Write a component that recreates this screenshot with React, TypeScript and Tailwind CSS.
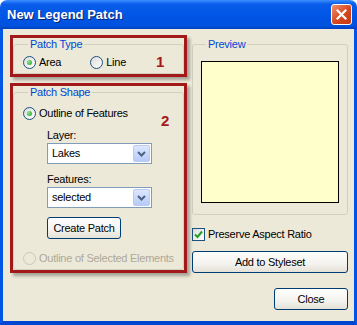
import React from "react";

const font = { fontFamily: '"Liberation Sans", Arial, sans-serif' };

const Radio = ({ checked = false, disabled = false }: { checked?: boolean; disabled?: boolean }) => (
  <span
    className={`flex h-[13px] w-[13px] shrink-0 items-center justify-center rounded-full border ${
      disabled
        ? "border-[#CAC8BB] bg-[#ECE9D8]"
        : "border-[#1C5180] bg-[linear-gradient(135deg,#DCDCD7,#FFFFFF)]"
    }`}
  >
    {checked && (
      <span className="h-[5px] w-[5px] rounded-full bg-[radial-gradient(circle_at_35%_35%,#8BE38B,#21A121)]" />
    )}
  </span>
);

const Dropdown = ({ value }: { value: string }) => (
  <div className="flex h-[21px] w-[105px] items-center border border-[#7F9DB9] bg-white pl-[4px] pr-px">
    <span className="flex-1 text-[11px] tracking-[-0.25px] text-black">{value}</span>
    <span className="flex h-[17px] w-[17px] items-center justify-center rounded-[2px] border border-[#B9CBF3] bg-[linear-gradient(to_bottom,#DDE7FE,#B6CBF8)]">
      <svg width="9" height="6" viewBox="0 0 9 6">
        <path d="M1 1 L4.5 4.5 L8 1" fill="none" stroke="#4D6185" strokeWidth="2" />
      </svg>
    </span>
  </div>
);

const XPButton = ({ label, className }: { label: string; className: string }) => (
  <button
    className={`flex items-center justify-center rounded-[3px] border border-[#003C74] bg-[linear-gradient(to_bottom,#FFFFFF,#F3F2EE_60%,#E4E1D6)] text-[11px] tracking-[-0.25px] text-black ${className}`}
  >
    {label}
  </button>
);

export default function App() {
  return (
    <div className="h-[325px] w-[357px] bg-white" style={font}>
      <div className="flex h-[325px] w-[357px] flex-col overflow-hidden rounded-t-[7px]">
        {/* title bar */}
        <div className="flex h-[29px] shrink-0 items-center justify-between bg-[linear-gradient(to_bottom,#3C8EFF_0%,#0A5DEA_14%,#0056E6_50%,#0052E0_88%,#0040BE_100%)] pl-[7px] pr-[5px]">
          <span className="text-[13px] font-bold text-white [text-shadow:1px_1px_0_#0A246A]">
            New Legend Patch
          </span>
          <span className="flex h-[21px] w-[21px] items-center justify-center rounded-[3px] border border-white bg-[linear-gradient(135deg,#F0906C,#D5471F_55%,#C23A14)]">
            <svg width="11" height="11" viewBox="0 0 11 11">
              <path d="M1.5 1.5 L9.5 9.5 M9.5 1.5 L1.5 9.5" stroke="white" strokeWidth="2.2" strokeLinecap="square" />
            </svg>
          </span>
        </div>

        {/* body */}
        <div className="flex flex-1 border-x-[3px] border-b-[4px] border-x-[#0055E5] border-b-[#0046D0] bg-[#ECE9D8] pl-[7px] pt-[6px] tracking-[-0.25px]">
          {/* left column */}
          <div className="flex w-[177px] flex-col gap-[6px]">
            <div className="relative h-[42px] border-[3px] border-[#A31818] shadow-[3px_3px_3px_rgba(0,0,0,0.3)]">
              <fieldset className="h-full rounded-[3px] border border-[#D0D0BF] pl-[9px]">
                <legend className="ml-[5px] px-[2px] text-[11px] leading-[13px] text-[#0046D5]">Patch Type</legend>
                <div className="mt-[4px] flex h-[14px] items-center">
                  <Radio checked />
                  <span className="ml-[3px] text-[11px] text-black">Area</span>
                  <span className="ml-[29px]">
                    <Radio />
                  </span>
                  <span className="ml-[3px] text-[11px] text-black">Line</span>
                </div>
              </fieldset>
              <span className="absolute left-[143px] top-[15px] text-[15px] font-bold leading-[18px] text-[#A31818]">1</span>
            </div>

            <div className="relative h-[190px] border-[3px] border-[#A31818] shadow-[3px_3px_3px_rgba(0,0,0,0.3)]">
              <fieldset className="flex h-full flex-col rounded-[3px] border border-[#D0D0BF] pl-[9px]">
                <legend className="ml-[5px] px-[2px] text-[11px] leading-[13px] text-[#0046D5]">Patch Shape</legend>
                <div className="mt-[7px] flex h-[14px] items-center">
                  <Radio checked />
                  <span className="ml-[3px] text-[11px] text-black">Outline of Features</span>
                </div>
                <div className="ml-[24px] flex flex-col">
                  <span className="mt-[9px] h-[13px] text-[11px] leading-[13px] text-black">Layer:</span>
                  <div className="mt-px">
                    <Dropdown value="Lakes" />
                  </div>
                  <span className="mt-[9px] h-[13px] text-[11px] leading-[13px] text-black">Features:</span>
                  <div className="mt-px">
                    <Dropdown value="selected" />
                  </div>
                  <XPButton label="Create Patch" className="mt-[9px] h-[22px] w-[74px]" />
                </div>
                <div className="mt-[12px] flex h-[14px] items-center">
                  <Radio disabled />
                  <span className="ml-[3px] text-[11px] text-[#ACA899]">Outline of Selected Elements</span>
                </div>
              </fieldset>
              <span className="absolute left-[148px] top-[26px] text-[15px] font-bold leading-[18px] text-[#A31818]">2</span>
            </div>
          </div>

          {/* right column */}
          <div className="ml-[5px] flex w-[156px] flex-col">
            <fieldset className="mt-[3px] h-[177px] rounded-[3px] border border-[#D0D0BF] px-[8px]">
              <legend className="ml-[5px] px-[2px] text-[11px] leading-[13px] text-[#0046D5]">Preview</legend>
              <div className="mt-[10px] h-[142px] border border-black bg-[#FFFFCC]" />
            </fieldset>
            <div className="mt-[13px] flex h-[13px] items-center">
              <span className="flex h-[13px] w-[13px] items-center justify-center border border-[#1C5180] bg-[linear-gradient(135deg,#DCDCD7,#FFFFFF)]">
                <svg width="9" height="9" viewBox="0 0 9 9">
                  <path d="M1 4.5 L3.5 7 L8 1.5" fill="none" stroke="#21A121" strokeWidth="2" />
                </svg>
              </span>
              <span className="ml-[3px] text-[11px] text-black">Preserve Aspect Ratio</span>
            </div>
            <XPButton label="Add to Styleset" className="mt-[10px] h-[22px] w-[156px]" />
            <XPButton label="Close" className="ml-auto mt-[15px] h-[22px] w-[74px]" />
          </div>
        </div>
      </div>
    </div>
  );
}
